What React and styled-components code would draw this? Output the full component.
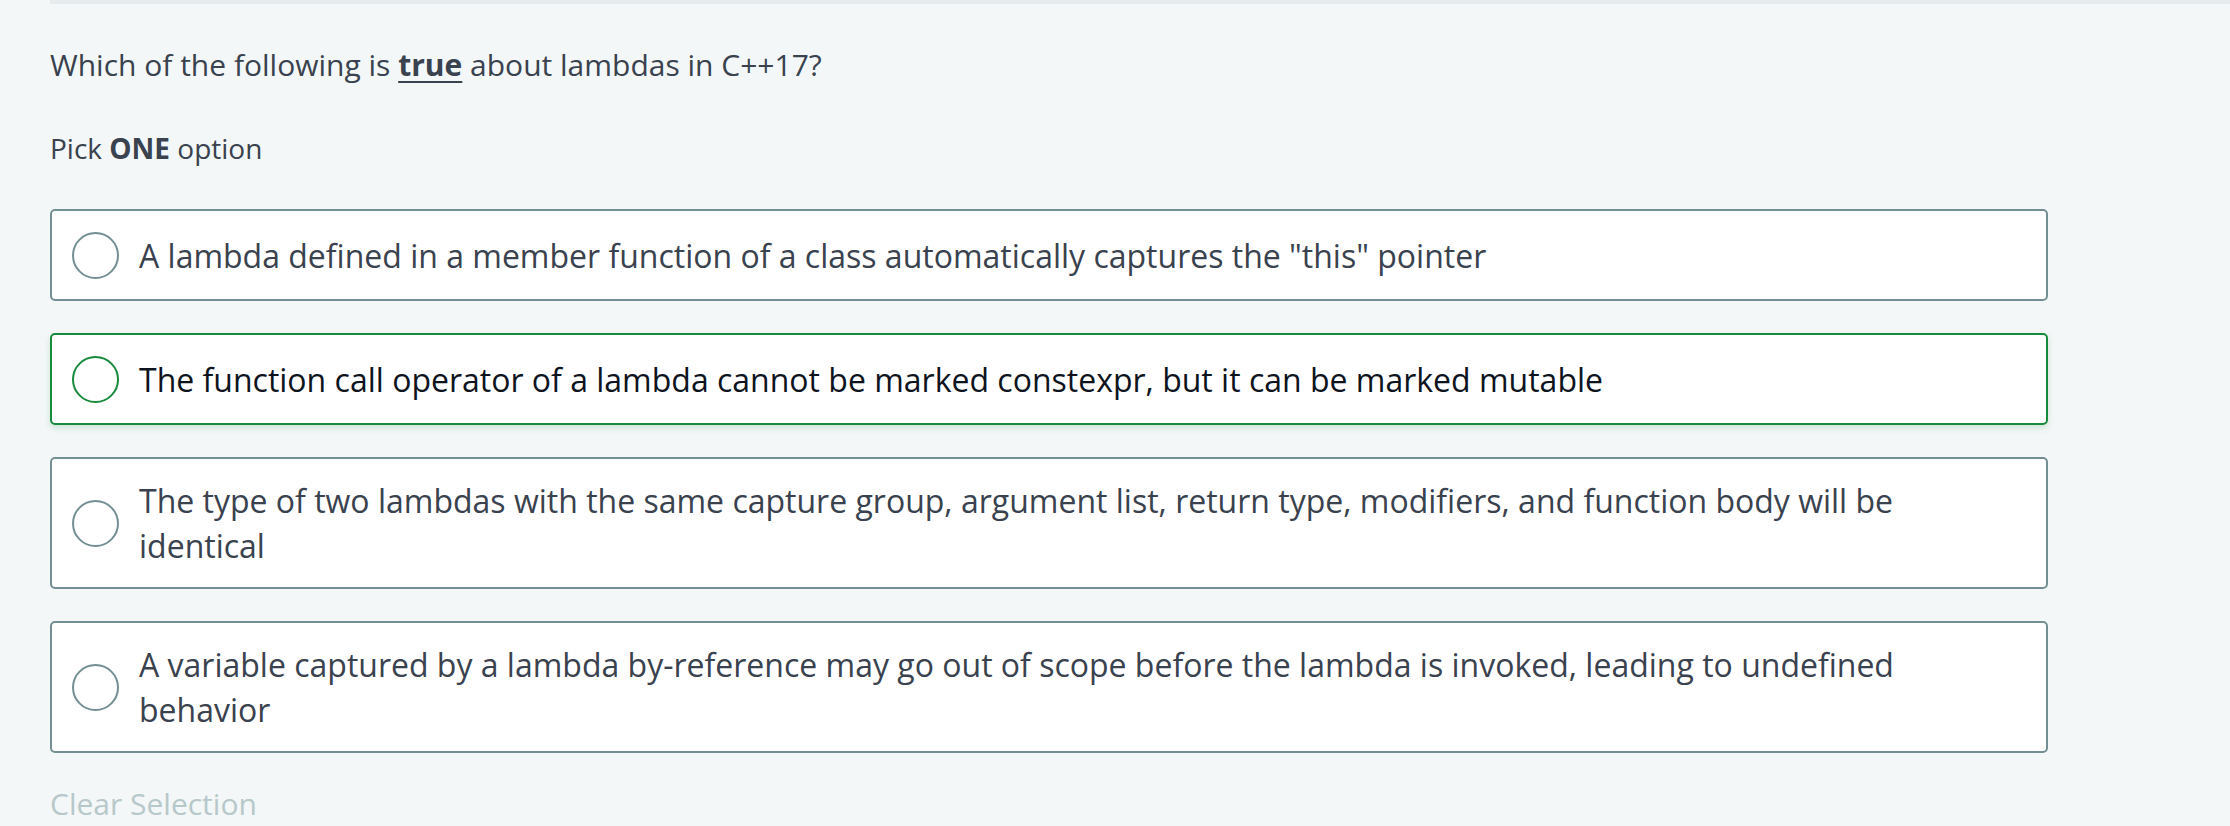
import React, { useState } from 'react'
import styled, { createGlobalStyle } from 'styled-components'

const GlobalStyle = createGlobalStyle`
  html, body {
    margin: 0;
    padding: 0;
    background: #f3f7f7;
  }
  body {
    font-family: "Open Sans", "Noto Sans", sans-serif;
    color: #39424e;
  }
`

const options = [
  'A lambda defined in a member function of a class automatically captures the "this" pointer',
  'The function call operator of a lambda cannot be marked constexpr, but it can be marked mutable',
  'The type of two lambdas with the same capture group, argument list, return type, modifiers, and function body will be identical',
  'A variable captured by a lambda by-reference may go out of scope before the lambda is invoked, leading to undefined behavior',
]

const App = () => {
  const [picked] = useState(1)

  return (
    <>
      <GlobalStyle />
      <Page>
        <Panel>
          <Question>
            Which of the following is <Strong>true</Strong> about lambdas in C++17?
          </Question>
          <Hint>
            Pick <b>ONE</b> option
          </Hint>
          <OptionList>
            {options.map((text, i) => (
              <Option key={i} selected={picked === i}>
                <Radio selected={picked === i} />
                <OptionText selected={picked === i}>{text}</OptionText>
              </Option>
            ))}
          </OptionList>
          <ClearButton>Clear Selection</ClearButton>
        </Panel>
      </Page>
    </>
  )
}

export default App

const Page = styled.div`
  padding-left: 50px;
  min-height: 826px;
  box-sizing: border-box;
`

const Panel = styled.div`
  border-top: 4px solid #e6ecee;
  padding-top: 38px;
`

const Question = styled.div`
  font-size: 30px;
  line-height: 45px;
  color: #39424e;
`

const Strong = styled.span`
  font-weight: 700;
  text-decoration: underline;
  text-underline-offset: 5px;
  text-decoration-thickness: 2px;
`

const Hint = styled.div`
  margin-top: 41px;
  font-size: 28px;
  line-height: 40px;
  color: #39424e;
  b {
    font-weight: 700;
  }
`

const OptionList = styled.div`
  width: 1998px;
  margin-top: 41px;
  display: flex;
  flex-direction: column;
  gap: 32px;
`

const Option = styled.div`
  display: flex;
  align-items: center;
  gap: 20px;
  box-sizing: border-box;
  min-height: 92px;
  padding: 19px 22px 19px 20px;
  background: #fff;
  border: 2px solid ${p => (p.selected ? '#188a3c' : '#738f93')};
  border-radius: 5px;
  box-shadow: ${p => (p.selected ? '0 3px 6px rgba(24, 138, 60, 0.18)' : 'none')};
`

const Radio = styled.span`
  flex: none;
  width: 47px;
  height: 47px;
  box-sizing: border-box;
  border-radius: 50%;
  border: 2px solid ${p => (p.selected ? '#188a3c' : '#738f93')};
`

const OptionText = styled.div`
  font-size: 32px;
  line-height: 45px;
  color: ${p => (p.selected ? '#0e141e' : '#39424e')};
`

const ClearButton = styled.div`
  margin-top: 31px;
  font-size: 30px;
  line-height: 40px;
  color: #b7c8cb;
`
